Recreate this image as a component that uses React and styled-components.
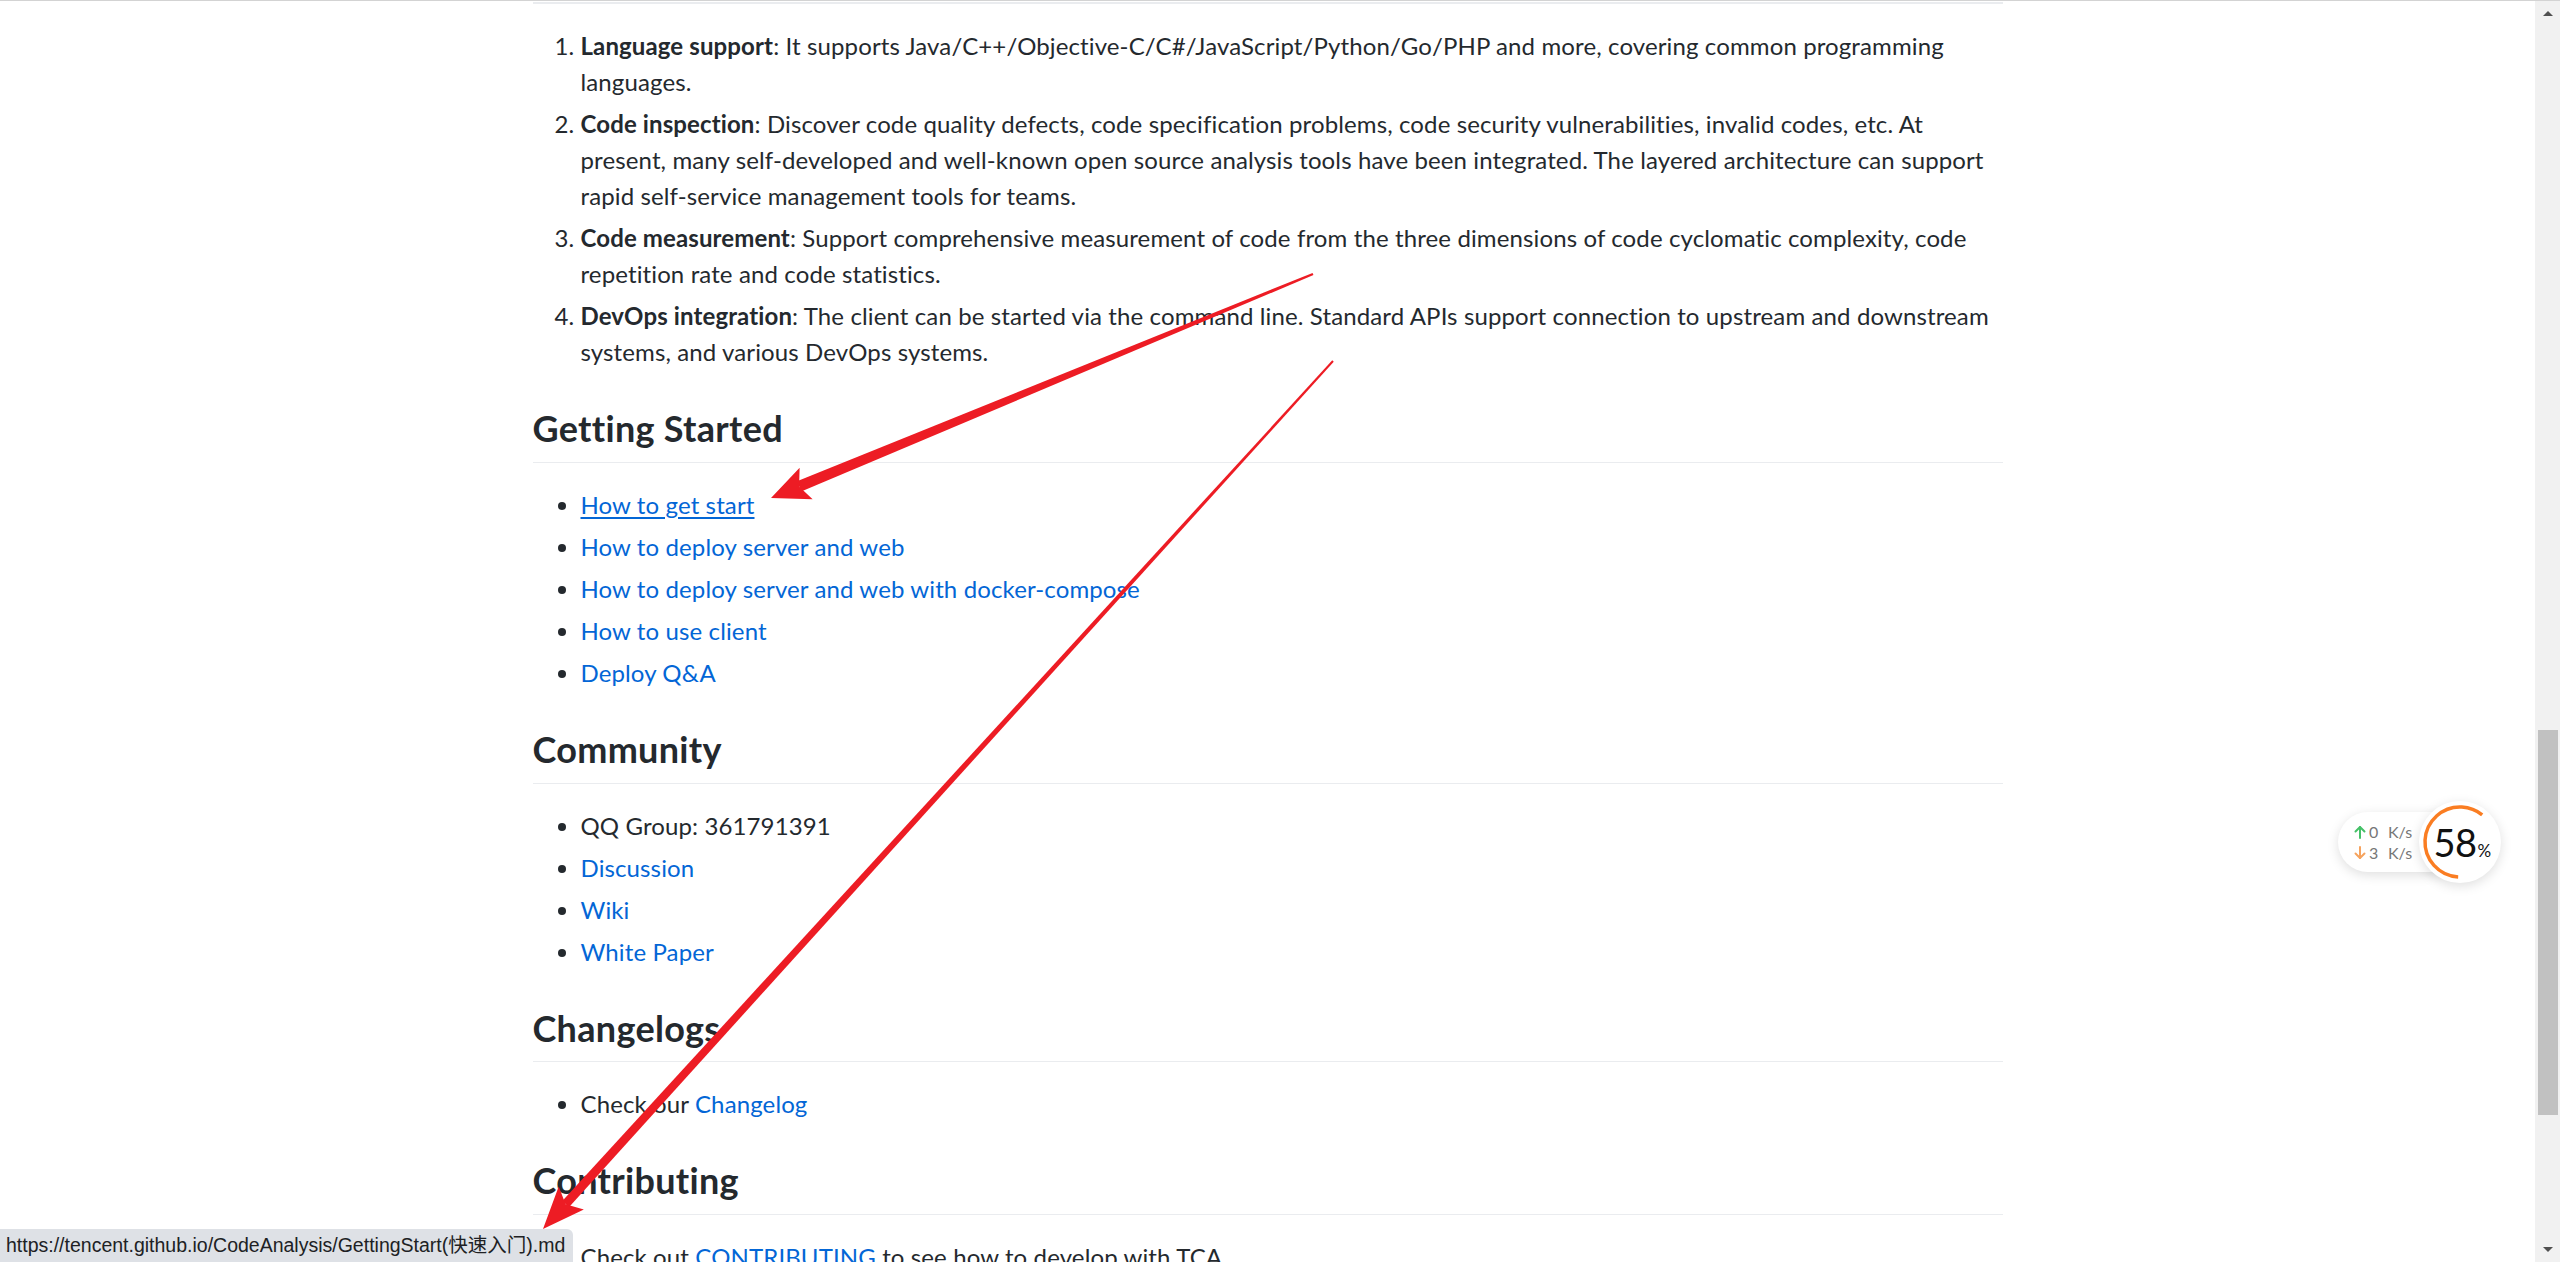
import React from 'react';
import styled, { createGlobalStyle } from 'styled-components';

const Global = createGlobalStyle`
  html, body { margin: 0; padding: 0; background: #fff; overflow: hidden; }
  body { font-family: Lato, "Liberation Sans", sans-serif; }
  * { box-sizing: border-box; }
`;

const FONT = 'Lato, "Liberation Sans", "Noto Sans CJK SC", sans-serif';

const Screen = styled.div`
  position: relative;
  width: 2560px;
  height: 1262px;
  display: flex;
  border-top: 1px solid #d3d3d3;
  overflow: hidden;
  background: #fff;
`;

const Viewport = styled.main`
  flex: 1;
  min-width: 0;
  overflow: hidden;
`;

const Article = styled.article`
  width: 1470px;
  margin: 0 auto;
  color: #24292e;
  font-family: ${FONT};
  font-size: 24px;
  line-height: 36px;
  letter-spacing: 0.12px;
`;

const CutRule = styled.div`
  height: 2px;
  margin-top: 1px;
  background: #eaecef;
`;

const OrderedList = styled.ol`
  margin: 24px 0 24px;
  padding-left: 48px;
`;

const BulletList = styled.ul`
  margin: 0 0 24px;
  padding-left: 48px;
  list-style: disc;
`;

const Item = styled.li`
  & + & {
    margin-top: 6px;
  }
`;

const Strong = styled.strong`
  font-weight: 700;
`;

const Heading = styled.h2`
  margin: 36px 0 24px;
  font-size: 36px;
  font-weight: 700;
  line-height: 1.25;
  letter-spacing: 0.3px;
  padding-bottom: 10.8px;
  border-bottom: 1.5px solid #eaecef;
`;

const Link = styled.a`
  color: #0366d6;
  text-decoration: ${(p) => (p.$hover ? 'underline' : 'none')};
  text-underline-offset: 3px;
  text-decoration-thickness: 2px;
  cursor: pointer;
`;

/* ---------- scrollbar ---------- */
const Scrollbar = styled.aside`
  width: 25px;
  background: #f1f1f1;
  display: flex;
  flex-direction: column;
`;

const ScrollButton = styled.div`
  height: 25px;
  display: flex;
  align-items: center;
  justify-content: center;
  &::before {
    content: '';
    width: 0;
    height: 0;
    border-left: 5px solid transparent;
    border-right: 5px solid transparent;
    ${(p) =>
      p.$down
        ? 'border-top: 5px solid #505050;'
        : 'border-bottom: 5px solid #505050;'}
  }
`;

const Track = styled.div`
  flex: 1;
  display: flex;
  flex-direction: column;
`;

const Thumb = styled.div`
  margin: 0 2px 0 3px;
  background: #c1c1c1;
`;

/* ---------- overlays ---------- */
const Annotations = styled.svg`
  position: absolute;
  left: 0;
  top: 0;
  width: 2560px;
  height: 1262px;
  pointer-events: none;
  z-index: 5;
`;

const StatusBubble = styled.div`
  position: absolute;
  left: 0;
  bottom: 0;
  height: 33px;
  padding: 0 8px 0 6px;
  background: #dee1e6;
  border-top-right-radius: 6px;
  color: #202124;
  font-family: "Liberation Sans", "Noto Sans CJK SC", sans-serif;
  font-size: 19.5px;
  line-height: 33px;
  white-space: nowrap;
  z-index: 4;
`;

const SpeedBall = styled.div`
  position: absolute;
  left: 2338px;
  top: 800px;
  display: flex;
  align-items: center;
  font-family: Lato, "Noto Sans", sans-serif;
  z-index: 3;
`;

const SpeedPill = styled.div`
  width: 122px;
  height: 60px;
  margin-right: -41px;
  padding-left: 16px;
  border-radius: 30px;
  background: #fff;
  box-shadow: 0 3px 12px rgba(0, 0, 0, 0.13);
  display: flex;
  flex-direction: column;
  justify-content: center;
  gap: 1px;
`;

const SpeedRow = styled.div`
  display: flex;
  align-items: center;
  height: 20px;
  font-size: 16px;
  color: #777;
`;

const SpeedValue = styled.span`
  width: 19px;
  margin-left: 3px;
`;

const Ring = styled.div`
  position: relative;
  width: 82px;
  height: 82px;
  border-radius: 50%;
  background: #fff;
  box-shadow: 0 3px 12px rgba(0, 0, 0, 0.13);
  display: flex;
  align-items: center;
  justify-content: center;
  color: #111;
`;

const RingSvg = styled.svg`
  position: absolute;
  inset: 0;
`;

const Percent = styled.span`
  font-size: 38px;
  line-height: 1;
  font-weight: 400;
  letter-spacing: -0.5px;
  position: relative;
  left: 2px;
`;

const PercentSign = styled.span`
  font-size: 17px;
  margin-left: 1px;
`;

function Arrow({ tail, tip, tailW, neckW, headLen, headHalf }) {
  const dx = tip[0] - tail[0];
  const dy = tip[1] - tail[1];
  const len = Math.hypot(dx, dy);
  const d = [dx / len, dy / len];
  const n = [-d[1], d[0]];
  const base = [tip[0] - headLen * d[0], tip[1] - headLen * d[1]];
  const neck = [tip[0] - headLen * 0.8 * d[0], tip[1] - headLen * 0.8 * d[1]];
  const p = (pt, k) => `${pt[0] + k * n[0]},${pt[1] + k * n[1]}`;
  const shaft = [p(tail, tailW), p(neck, neckW), p(neck, -neckW), p(tail, -tailW)].join(' ');
  const head = [`${tip[0]},${tip[1]}`, p(base, headHalf), p(neck, 0), p(base, -headHalf)].join(' ');
  return (
    <g fill="#ed1c24">
      <polygon points={shaft} />
      <polygon points={head} />
    </g>
  );
}

const SpeedArrow = ({ up, color }) => (
  <svg width="12" height="14" viewBox="0 0 12 14">
    <g stroke={color} strokeWidth="2" fill="none" strokeLinecap="round" strokeLinejoin="round">
      {up ? (
        <>
          <path d="M6 13V2" />
          <path d="M1.5 6.5L6 2l4.5 4.5" />
        </>
      ) : (
        <>
          <path d="M6 1v11" />
          <path d="M1.5 7.5L6 12l4.5-4.5" />
        </>
      )}
    </g>
  </svg>
);

const features = [
  ['Language support', 'It supports Java/C++/Objective-C/C#/JavaScript/Python/Go/PHP and more, covering common programming languages.'],
  ['Code inspection', 'Discover code quality defects, code specification problems, code security vulnerabilities, invalid codes, etc. At present, many self-developed and well-known open source analysis tools have been integrated. The layered architecture can support rapid self-service management tools for teams.'],
  ['Code measurement', 'Support comprehensive measurement of code from the three dimensions of code cyclomatic complexity, code repetition rate and code statistics.'],
  ['DevOps integration', 'The client can be started via the command line. Standard APIs support connection to upstream and downstream systems, and various DevOps systems.'],
];

const gettingStarted = [
  'How to get start',
  'How to deploy server and web',
  'How to deploy server and web with docker-compose',
  'How to use client',
  'Deploy Q&A',
];

export default function App() {
  const trackLen = 1262 - 1 - 50;
  const thumbTop = Math.round(trackLen * 0.5815);
  const thumbSize = Math.round(trackLen * 0.318);
  const ringR = 35;
  const circ = 2 * Math.PI * ringR;

  return (
    <>
      <Global />
      <Screen>
        <Viewport>
          <Article>
            <CutRule />
            <OrderedList>
              {features.map(([title, text]) => (
                <Item key={title}>
                  <Strong>{title}</Strong>: {text}
                </Item>
              ))}
            </OrderedList>

            <Heading>Getting Started</Heading>
            <BulletList>
              {gettingStarted.map((t, i) => (
                <Item key={t}>
                  <Link $hover={i === 0}>{t}</Link>
                </Item>
              ))}
            </BulletList>

            <Heading>Community</Heading>
            <BulletList>
              <Item>QQ Group: 361791391</Item>
              <Item><Link>Discussion</Link></Item>
              <Item><Link>Wiki</Link></Item>
              <Item><Link>White Paper</Link></Item>
            </BulletList>

            <Heading>Changelogs</Heading>
            <BulletList>
              <Item>Check our <Link>Changelog</Link></Item>
            </BulletList>

            <Heading>Contributing</Heading>
            <BulletList>
              <Item>Check out <Link>CONTRIBUTING</Link> to see how to develop with TCA.</Item>
            </BulletList>
          </Article>
        </Viewport>

        <Scrollbar>
          <ScrollButton />
          <Track>
            <Thumb style={{ marginTop: thumbTop, height: thumbSize }} />
          </Track>
          <ScrollButton $down />
        </Scrollbar>

        <SpeedBall>
          <SpeedPill>
            <SpeedRow>
              <SpeedArrow up color="#45c168" />
              <SpeedValue>0</SpeedValue>
              <span>K/s</span>
            </SpeedRow>
            <SpeedRow>
              <SpeedArrow color="#f6a35e" />
              <SpeedValue>3</SpeedValue>
              <span>K/s</span>
            </SpeedRow>
          </SpeedPill>
          <Ring>
            <RingSvg viewBox="0 0 82 82" width="82" height="82">
              <circle
                cx="41"
                cy="41"
                r={ringR}
                fill="none"
                stroke="#fa7d22"
                strokeWidth="3.5"
                strokeDasharray={`${circ * 0.6} ${circ}`}
                transform="rotate(93 41 41)"
              />
            </RingSvg>
            <Percent>
              58<PercentSign>%</PercentSign>
            </Percent>
          </Ring>
        </SpeedBall>

        <StatusBubble>https://tencent.github.io/CodeAnalysis/GettingStart(快速入门).md</StatusBubble>

        <Annotations viewBox="0 0 2560 1262">
          <Arrow tail={[1313, 273]} tip={[771, 497]} tailW={1.2} neckW={5.5} headLen={38} headHalf={17} />
          <Arrow tail={[1333, 360]} tip={[543, 1228]} tailW={1} neckW={4.5} headLen={42} headHalf={17} />
        </Annotations>
      </Screen>
    </>
  );
}
